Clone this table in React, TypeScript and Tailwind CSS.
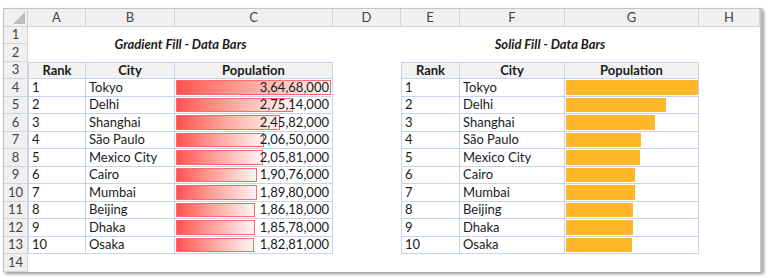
import React from "react"

type City = {
  rank: number
  city: string
  pop: number
  label: string
}

const cities: City[] = [
  { rank: 1, city: "Tokyo", pop: 36468000, label: "3,64,68,000" },
  { rank: 2, city: "Delhi", pop: 27514000, label: "2,75,14,000" },
  { rank: 3, city: "Shanghai", pop: 24582000, label: "2,45,82,000" },
  { rank: 4, city: "São Paulo", pop: 20650000, label: "2,06,50,000" },
  { rank: 5, city: "Mexico City", pop: 20581000, label: "2,05,81,000" },
  { rank: 6, city: "Cairo", pop: 19076000, label: "1,90,76,000" },
  { rank: 7, city: "Mumbai", pop: 18980000, label: "1,89,80,000" },
  { rank: 8, city: "Beijing", pop: 18618000, label: "1,86,18,000" },
  { rank: 9, city: "Dhaka", pop: 18578000, label: "1,85,78,000" },
  { rank: 10, city: "Osaka", pop: 18281000, label: "1,82,81,000" },
]

const maxPop = 36468000
const letters = ["A", "B", "C", "D", "E", "F", "G", "H"]

const colHead =
  "flex items-center justify-center border-r border-b border-[#d4d4d4] bg-[#f0f0f0] text-[#444]"
const rowHead =
  "flex items-center justify-center border-r border-b border-[#d4d4d4] bg-[#f0f0f0] text-[#444]"
const tableCell = "border-r border-b border-[#c6d3ee]"
const headCell =
  "flex items-center justify-center border-r border-t border-b border-[#c6d3ee] bg-[#f2f2f2] font-bold"

function GradientBar({ pop, label }: { pop: number; label: string }) {
  return (
    <div className={`relative flex items-center justify-end pr-[3px] ${tableCell}`}>
      <div
        className="absolute left-[1px] top-[1px] bottom-[1px] border border-[#ff6b6b] bg-linear-to-r from-[#ff4f4f] to-[#fff4f4]"
        style={{ width: `${(pop / maxPop) * 155}px` }}
      />
      <span className="relative">{label}</span>
    </div>
  )
}

function SolidBar({ pop }: { pop: number }) {
  return (
    <div className={`relative ${tableCell}`}>
      <div
        className="absolute left-[1px] top-[1px] bottom-[1px] bg-[#ffb629]"
        style={{ width: `${(pop / maxPop) * 132}px` }}
      />
    </div>
  )
}

export default function App() {
  return (
    <div className="min-h-[278px] bg-white pt-[8px] pl-[3px] font-['Lato',sans-serif] text-[13px] text-[#1a1a1a]">
      <div className="w-fit border-l border-t border-r-2 border-[#c4c4c4] shadow-[2px_2px_3px_rgba(0,0,0,0.4)]">
        <div className="grid grid-cols-[24px_58px_89px_158px_68px_59px_105px_134px_61px] grid-rows-[18px_17px_18px_17px_18px_17px_18px_17px_18px_17px_18px_17px_18px_17px_18px]">
          {/* corner */}
          <div className="flex items-end justify-end border-r border-b border-[#d4d4d4] bg-[#f0f0f0] p-[2px]">
            <svg width="12" height="12" viewBox="0 0 12 12">
              <polygon points="12,0 12,12 0,12" fill="#bdbdbd" />
            </svg>
          </div>
          {letters.map((l) => (
            <div key={l} className={colHead}>
              {l}
            </div>
          ))}

          {/* row 1 with merged titles */}
          <div className={rowHead}>1</div>
          <div className="col-span-3 row-span-2 flex items-center justify-center font-bold italic">
            Gradient Fill - Data Bars
          </div>
          <div />
          <div className="col-span-3 row-span-2 flex items-center justify-center font-bold italic">
            Solid Fill - Data Bars
          </div>
          <div />

          {/* row 2 */}
          <div className={rowHead}>2</div>
          <div />
          <div />

          {/* row 3 headers */}
          <div className={rowHead}>3</div>
          <div className={`${headCell} border-l`}>Rank</div>
          <div className={headCell}>City</div>
          <div className={headCell}>Population</div>
          <div />
          <div className={`${headCell} border-l`}>Rank</div>
          <div className={headCell}>City</div>
          <div className={headCell}>Population</div>
          <div />

          {cities.map((c, i) => (
            <React.Fragment key={c.rank}>
              <div className={rowHead}>{i + 4}</div>
              <div className={`flex items-center pl-[3px] border-l ${tableCell}`}>{c.rank}</div>
              <div className={`flex items-center pl-[3px] ${tableCell}`}>{c.city}</div>
              <GradientBar pop={c.pop} label={c.label} />
              <div />
              <div className={`flex items-center pl-[3px] border-l ${tableCell}`}>{c.rank}</div>
              <div className={`flex items-center pl-[3px] ${tableCell}`}>{c.city}</div>
              <SolidBar pop={c.pop} />
              <div />
            </React.Fragment>
          ))}

          {/* row 14 */}
          <div className={rowHead}>14</div>
          <div className="col-span-8" />
        </div>
      </div>
    </div>
  )
}
